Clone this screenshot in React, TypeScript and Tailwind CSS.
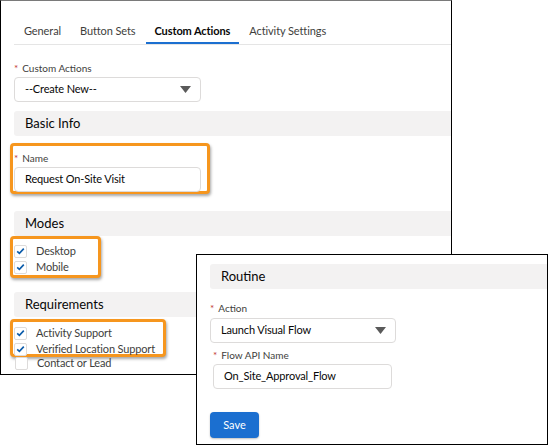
import React from 'react';

const font = { fontFamily: 'Lato, "Open Sans", sans-serif' };

function Req({ children }: { children: React.ReactNode }) {
  return (
    <div className="flex items-center h-[12px] text-[10px] text-[#3e3e3c] whitespace-nowrap">
      <span className="text-[#c23934] mr-[4px] text-[10px]">*</span>
      {children}
    </div>
  );
}

function Caret() {
  return (
    <svg width="11" height="7" viewBox="0 0 11 7" className="shrink-0">
      <path d="M0 0h11L5.5 7z" fill="#5a5a5a" />
    </svg>
  );
}

function SectionHead({ title }: { title: string }) {
  return (
    <div className="h-[25px] bg-[#f3f2f2] rounded-l-[3px] flex items-center pl-[11px] text-[13px] text-[#080707]">
      {title}
    </div>
  );
}

function Check({ label, checked }: { label: string; checked: boolean }) {
  return (
    <div className="flex items-center h-[16px] text-[11px] tracking-[-0.15px] text-[#3e3e3c] whitespace-nowrap">
      <span className="w-[13px] h-[13px] border border-[#dddbda] rounded-[2px] bg-white flex items-center justify-center mr-[9px] ml-[1px] shrink-0">
        {checked && (
          <svg width="9" height="8" viewBox="0 0 9 8">
            <path d="M1.2 4.3l2.2 2.1L7.8 1.6" stroke="#0b5cab" strokeWidth="1.6" fill="none" />
          </svg>
        )}
      </span>
      {label}
    </div>
  );
}

function Highlight({ className, children }: { className: string; children: React.ReactNode }) {
  return (
    <div
      className={`-ml-[4px] border-[3px] border-[#f6961e] rounded-[4px] shadow-[1px_2px_3px_rgba(0,0,0,0.35)] bg-white ${className}`}
    >
      {children}
    </div>
  );
}

export default function App() {
  const tabs = ['General', 'Button Sets', 'Custom Actions', 'Activity Settings'];
  return (
    <div className="relative w-[548px] h-[446px] bg-white overflow-hidden" style={font}>
      {/* main settings panel */}
      <div className="w-[452px] h-[375px] border border-black border-t-[#7a7a7a] pl-[13px] bg-white">
        <div className="flex h-[44px] pt-[14px] border-b border-[#e5e5e5] text-[11px] tracking-[-0.1px] text-[#3e3e3c]">
          {tabs.map((t, i) => (
            <div
              key={t}
              className={`px-[9px] flex items-start pt-[8px] whitespace-nowrap ${
                t === 'Custom Actions'
                  ? 'border-b-[2px] border-[#1b6fd0] font-bold text-[#080707]'
                  : ''
              } ${i === 0 ? 'pl-[10px]' : ''} ${i < 3 ? 'mr-[1px]' : ''}`}
            >
              {t}
            </div>
          ))}
        </div>

        <div className="pt-[17px]">
          <Req>Custom Actions</Req>
          <div className="mt-[3px] w-[187px] h-[25px] border border-[#dddbda] rounded-[4px] flex items-center justify-between pl-[10px] pr-[9px] text-[11px] tracking-[-0.15px] text-[#080707]">
            <span>--Create New--</span>
            <Caret />
          </div>
        </div>

        <div className="mt-[9px]">
          <SectionHead title="Basic Info" />
        </div>

        <Highlight className="mt-[7px] w-[200px] h-[51px] pl-[1px] pt-[6px]">
          <Req>Name</Req>
          <div className="mt-[3px] w-[187px] h-[25px] border border-[#dddbda] rounded-[4px] flex items-center pl-[10px] text-[11px] tracking-[-0.15px] text-[#080707]">
            Request On-Site Visit
          </div>
        </Highlight>

        <div className="mt-[17px]">
          <SectionHead title="Modes" />
        </div>

        <Highlight className="w-[91px] h-[42px] pt-[4px]">
          <Check label="Desktop" checked />
          <Check label="Mobile" checked />
        </Highlight>

        <div className="mt-[14px]">
          <SectionHead title="Requirements" />
        </div>

        <Highlight className="mt-[2px] w-[156px] h-[38px] pt-[3px]">
          <Check label="Activity Support" checked />
          <Check label="Verified Location Support" checked />
        </Highlight>
        <div className="-mt-[2px]">
          <Check label="Contact or Lead" checked={false} />
        </div>
      </div>

      {/* overlaid routine panel */}
      <div className="absolute left-[196px] top-[254px] w-[352px] h-[191px] border border-black bg-white pl-[13px] pt-[9px]">
        <SectionHead title="Routine" />
        <div className="mt-[13px]">
          <Req>Action</Req>
        </div>
        <div className="mt-[4px] w-[186px] h-[25px] border border-[#dddbda] rounded-[4px] flex items-center justify-between pl-[10px] pr-[9px] text-[11px] tracking-[-0.15px] text-[#080707]">
          <span>Launch Visual Flow</span>
          <Caret />
        </div>
        <div className="mt-[6px] pl-[3px]">
          <Req>Flow API Name</Req>
        </div>
        <div className="mt-[3px] ml-[3px] w-[179px] h-[25px] border border-[#dddbda] rounded-[4px] flex items-center pl-[10px] text-[11px] tracking-[-0.15px] text-[#080707]">
          On_Site_Approval_Flow
        </div>
        <button className="mt-[23px] w-[49px] h-[26px] rounded-[4px] bg-[#1b6fd0] text-white text-[11px] shadow-[0_1px_2px_rgba(0,0,0,0.25)]">
          Save
        </button>
      </div>
    </div>
  );
}
